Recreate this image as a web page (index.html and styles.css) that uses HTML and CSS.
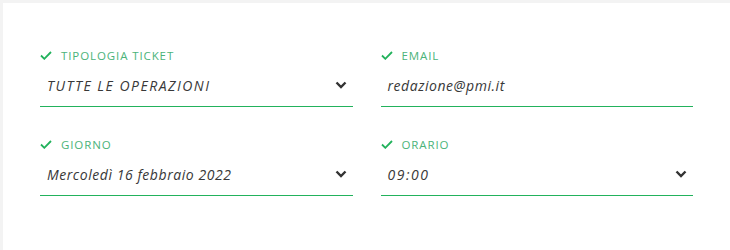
FILE: index.html
```html
<!DOCTYPE html>
<html lang="it">
<head>
	<meta charset="utf-8">
	<title>Ticket</title>
	<link rel="stylesheet" href="styles.css">
</head>
<body>
	<div class="card">
		<form class="form">
			<div class="field">
				<label class="label"><svg class="check" viewBox="0 0 12 9"><path d="M1 4.5 4.3 7.8 11 1"/></svg>Tipologia ticket</label>
				<div class="control select">
					<span class="value caps">TUTTE LE OPERAZIONI</span>
					<svg class="chevron" viewBox="0 0 12 8"><path d="M1.5 1.5 6 6 10.5 1.5"/></svg>
				</div>
			</div>
			<div class="field">
				<label class="label"><svg class="check" viewBox="0 0 12 9"><path d="M1 4.5 4.3 7.8 11 1"/></svg>Email</label>
				<div class="control">
					<span class="value">redazione@pmi.it</span>
				</div>
			</div>
			<div class="field">
				<label class="label"><svg class="check" viewBox="0 0 12 9"><path d="M1 4.5 4.3 7.8 11 1"/></svg>Giorno</label>
				<div class="control select">
					<span class="value">Mercoledì 16 febbraio 2022</span>
					<svg class="chevron" viewBox="0 0 12 8"><path d="M1.5 1.5 6 6 10.5 1.5"/></svg>
				</div>
			</div>
			<div class="field">
				<label class="label"><svg class="check" viewBox="0 0 12 9"><path d="M1 4.5 4.3 7.8 11 1"/></svg>Orario</label>
				<div class="control select">
					<span class="value caps">09:00</span>
					<svg class="chevron" viewBox="0 0 12 8"><path d="M1.5 1.5 6 6 10.5 1.5"/></svg>
				</div>
			</div>
		</form>
	</div>
</body>
</html>
```

FILE: styles.css
```css
html,
body {
	margin: 0;
	padding: 0;
	overflow: hidden;
}

:root {
	--green: #22b25c;
	--label: #4bb37a;
	--text: #383838;
}

body {
	background: #f3f3f3;
	padding: 3px 0 0 3px;
	height: 250px;
	box-sizing: border-box;
	font-family: "Open Sans", sans-serif;
}

.card {
	background: #fff;
	height: 100%;
	padding: 45px 37px 0 37px;
	box-sizing: border-box;
}

.form {
	display: grid;
	grid-template-columns: 1fr 1fr;
	column-gap: 28px;
	row-gap: 30px;
}

.label {
	display: flex;
	align-items: center;
	height: 14px;
	color: var(--label);
	font-size: 11.5px;
	letter-spacing: 0.9px;
	text-transform: uppercase;
}

.check {
	width: 12px;
	height: 9px;
	margin-right: 9px;
	fill: none;
	stroke: var(--green);
	stroke-width: 1.8;
}

.control {
	display: flex;
	align-items: center;
	justify-content: space-between;
	box-sizing: border-box;
	height: 45px;
	padding: 2px 6px 0 7px;
	border-bottom: 1px solid var(--green);
}

.value {
	color: var(--text);
	font-size: 14px;
	font-style: italic;
	letter-spacing: 0.55px;
}

.value.caps { letter-spacing: 1.5px; }

.chevron {
	width: 12px;
	height: 8px;
	fill: none;
	stroke: #333;
	stroke-width: 2.4;
}
```
